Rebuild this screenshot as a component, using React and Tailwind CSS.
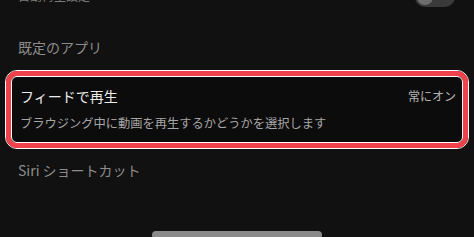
export default function App() {
  return (
    <div
      className="w-[474px] h-[237px] bg-[#111111] overflow-hidden flex flex-col"
      style={{ fontFamily: '"Noto Sans CJK JP", "Noto Sans", sans-serif' }}
    >
      {/* top row, mostly cut off */}
      <div className="flex items-center justify-between px-[18px] h-[20px] -mt-[13px]">
        <span className="text-[12px] leading-[16px] text-[#7a7a7a] -mt-[3px]">自動再生設定</span>
        <div className="relative w-[40px] h-[20px] rounded-full bg-[#3a3a3a] mr-[1px]">
          <div className="absolute left-[2px] top-[2px] w-[16px] h-[16px] rounded-full bg-[#6e6e6e]" />
        </div>
      </div>

      <div className="px-[18px] mt-[30px] text-[14px] leading-[20px] text-[#8c8c8c]">既定のアプリ</div>

      {/* highlighted row */}
      <div className="mx-[5px] mt-[13px] rounded-[12px] border border-white">
        <div className="rounded-[11px] border-[5px] border-[#ef424b]">
          <div className="rounded-[6px] border border-white bg-[#0c0c0c] pl-[8px] pr-[6px] pt-[9px] pb-[11px]">
            <div className="flex items-center justify-between">
              <span className="text-[14px] leading-[20px] text-[#ececec]">フィードで再生</span>
              <span className="text-[12px] leading-[20px] text-[#b4b4b4]">常にオン</span>
            </div>
            <div className="mt-[9px] text-[12.25px] leading-[16px] text-[#a6a6a6]">
              ブラウジング中に動画を再生するかどうかを選択します
            </div>
          </div>
        </div>
      </div>

      <div className="px-[18px] mt-[11px] text-[14px] leading-[20px] text-[#8c8c8c]">Siri ショートカット</div>

      <div className="mt-auto mb-[-2px] flex justify-center">
        <div className="w-[170px] h-[8px] rounded-full bg-[#8a8a8a]" />
      </div>
    </div>
  );
}
